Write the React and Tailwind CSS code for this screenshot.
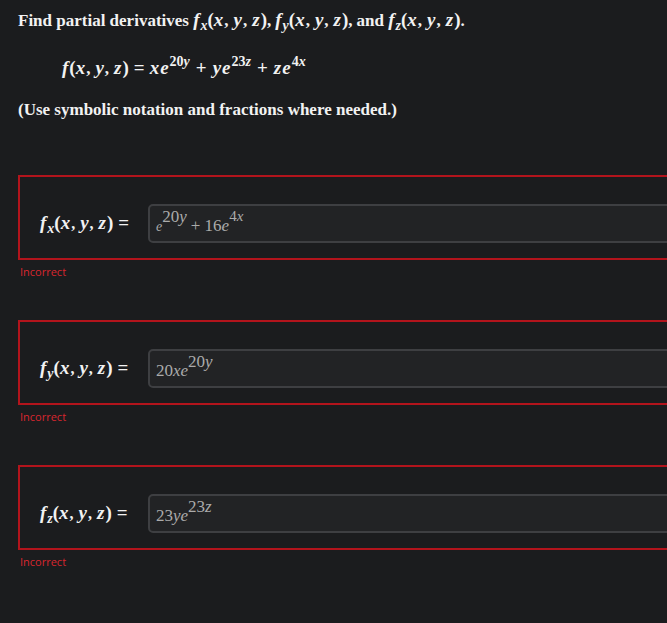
import React from "react";

const serif = { fontFamily: '"Liberation Serif", "DejaVu Serif", serif' };

function V({ children }) {
  return <i className="text-[19px] mr-[1px]">{children}</i>;
}

function Sub({ children }) {
  return <span className="inline-block text-[14px] leading-none align-[-4px]">{children}</span>;
}

function Sup({ children, cls = "text-[14px] align-[8px]" }) {
  return <span className={`inline-block leading-none ${cls}`}>{children}</span>;
}

function C({ w = "mr-[5px]" }) {
  return <span className={w}>,</span>;
}

function F({ s }) {
  return (
    <span className="whitespace-nowrap">
      <V>f</V>
      {s && <Sub><i>{s}</i></Sub>}
      <span className="text-[19px]">(</span>
      <V>x</V>
      <C />
      <V>y</V>
      <C />
      <V>z</V>
      <span className="text-[19px]">)</span>
    </span>
  );
}

function Eq() {
  return <span className="mx-[5px] text-[19px]">=</span>;
}

function Plus() {
  return <span className="mx-[6px] text-[19px]">+</span>;
}

function AnswerBox({ label, children }) {
  return (
    <div>
      <div className="w-[720px] border-2 border-[#b3141c] pt-[27px] pb-[15px] pl-[20px] flex items-center">
        <div className="w-[108px] whitespace-nowrap font-semibold text-[#f2f2f2]" style={serif}>
          <F s={label} />
          <span className="ml-[5px] text-[19px]">=</span>
        </div>
        <div className="flex-1 h-[39px] rounded-[5px] border-2 border-[#3e3f42] bg-[#222325] pl-[6px] flex items-end pb-[3px] text-[17px] text-[#ababab]" style={serif}>
          <span>{children}</span>
        </div>
      </div>
      <div className="mt-[4px] ml-[2px] text-[11px] font-medium text-[#d9262f] h-[56px]" style={{ fontFamily: '"Open Sans", "Noto Sans", sans-serif' }}>
        Incorrect
      </div>
    </div>
  );
}

export default function App() {
  return (
    <div className="w-[667px] h-[623px] overflow-hidden bg-[#1b1c1e] text-[#f2f2f2]">
      <div className="pl-[18px] pt-[9px]" style={serif}>
        <p className="text-[17px] font-semibold leading-[22px] whitespace-nowrap">
          Find partial derivatives <F s="x" />
          <C w="mr-[4px]" />
          <F s="y" />
          <C w="mr-[4px]" />
          and <F s="z" />.
        </p>
        <p className="mt-[22px] ml-[44px] text-[17px] font-semibold leading-[22px] whitespace-nowrap">
          <F />
          <Eq />
          <V>x</V>
          <V>e</V>
          <Sup>
            20<i>y</i>
          </Sup>
          <Plus />
          <V>y</V>
          <V>e</V>
          <Sup>
            23<i>z</i>
          </Sup>
          <Plus />
          <V>z</V>
          <V>e</V>
          <Sup>
            4<i>x</i>
          </Sup>
        </p>
        <p className="mt-[19px] text-[17px] font-semibold leading-[22px]">
          (Use symbolic notation and fractions where needed.)
        </p>
      </div>
      <div className="pl-[18px] mt-[54px]">
        <AnswerBox label="x">
          <i className="text-[14px]">e</i>
          <Sup cls="text-[17px] align-[9px]">
            20<i>y</i>
          </Sup>
          <span className="ml-[4px]">
            + 16<i>e</i>
          </span>
          <Sup cls="text-[15px] align-[10px]">
            4<i>x</i>
          </Sup>
        </AnswerBox>
        <AnswerBox label="y">
          20<i>xe</i>
          <Sup cls="text-[17px] align-[9px]">
            20<i>y</i>
          </Sup>
        </AnswerBox>
        <AnswerBox label="z">
          23<i>ye</i>
          <Sup cls="text-[17px] align-[9px]">
            23<i>z</i>
          </Sup>
        </AnswerBox>
      </div>
    </div>
  );
}
